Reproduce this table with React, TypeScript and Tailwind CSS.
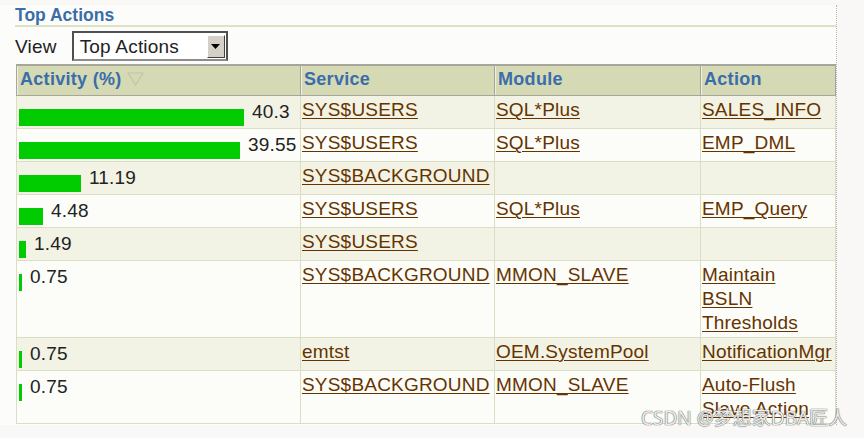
const rows = [
  { pct: '40.3', bar: 225, service: 'SYS$USERS', module: 'SQL*Plus', action: ['SALES_INFO'] },
  { pct: '39.55', bar: 221, service: 'SYS$USERS', module: 'SQL*Plus', action: ['EMP_DML'] },
  { pct: '11.19', bar: 62, service: 'SYS$BACKGROUND', module: '', action: [] },
  { pct: '4.48', bar: 24, service: 'SYS$USERS', module: 'SQL*Plus', action: ['EMP_Query'] },
  { pct: '1.49', bar: 7, service: 'SYS$USERS', module: '', action: [] },
  { pct: '0.75', bar: 3, service: 'SYS$BACKGROUND', module: 'MMON_SLAVE', action: ['Maintain', 'BSLN', 'Thresholds'] },
  { pct: '0.75', bar: 3, service: 'emtst', module: 'OEM.SystemPool', action: ['NotificationMgr'] },
  { pct: '0.75', bar: 3, service: 'SYS$BACKGROUND', module: 'MMON_SLAVE', action: ['Auto-Flush', 'Slave Action'] },
]

const linkCls = 'text-[#663300] underline decoration-1 underline-offset-[2px] whitespace-nowrap'

function HeaderCell({ label, sort }: { label: string; sort?: boolean }) {
  return (
    <div className="flex items-center border-r border-[#a6a69c] shadow-[inset_1px_0_0_#eef0dd] pl-[3px] pt-[1px] pb-[4px]">
      <span className="font-bold text-[18px] leading-[24px] tracking-[0.3px] text-[#3a6daa]">{label}</span>
      {sort && (
        <svg width="17" height="14" viewBox="0 0 17 14" className="ml-[5px]">
          <polygon points="1,1 16,1 8.5,13" fill="none" stroke="#c3c6a6" strokeWidth="1.2" />
        </svg>
      )}
    </div>
  )
}

export default function App() {
  return (
    <div className="relative min-h-[438px] bg-[#f9f8f6] pt-[5px] font-['Liberation_Sans',Arial,sans-serif] text-[19px] leading-[24px] tracking-[0.2px] text-[#222]">
      <div className="w-[837px] bg-[#fcfdfa] border-r border-dotted border-[#b5b5b5] pb-[1px]">
        {/* Heading */}
        <div className="ml-[15px] border-b-2 border-[#dde2c5]">
          <h2 className="text-[17.5px] leading-[20px] font-bold tracking-normal text-[#3a6daa]">Top Actions</h2>
        </div>

        {/* View select */}
        <div className="ml-[15px] mt-[4px] flex items-center">
          <span className="pt-[1px]">View</span>
          <div className="ml-[15px] flex h-[30px] w-[156px] items-center border-2 border-[#505050] border-b-[#8c8c8c] bg-white">
            <span className="pl-[6px] pt-[2px]">Top Actions</span>
            <div className="ml-auto mr-[1px] flex h-[23px] w-[18px] items-center justify-center border border-t-white border-l-white border-b-[#404040] border-r-[#404040] bg-[#d4d0c8]">
              <svg width="9" height="5" viewBox="0 0 9 5">
                <polygon points="0,0 9,0 4.5,5" fill="#000" />
              </svg>
            </div>
          </div>
        </div>

        {/* Table */}
        <div className="ml-[16px] mt-[3px] w-[820px]">
          <div className="grid grid-cols-[284px_194px_206px_135px] border-t-2 border-l border-b border-[#a6a69c] bg-[#d5dab5]">
            <HeaderCell label="Activity (%)" sort />
            <HeaderCell label="Service" />
            <HeaderCell label="Module" />
            <HeaderCell label="Action" />
          </div>
          {rows.map((r, i) => (
            <div
              key={i}
              className={
                'grid grid-cols-[284px_194px_206px_135px] border-l border-b border-[#dadec4] ' +
                (i % 2 === 0 ? 'bg-[#f2f3e4]' : 'bg-[#fcfdf9]')
              }
            >
              <div className="flex items-start border-r border-[#dadec4] pl-[2px] pt-[2px] pb-[2px] whitespace-nowrap">
                <div className="mt-[11px] h-[17px] bg-[#00cc00]" style={{ width: r.bar }} />
                <span className="ml-2 mt-[2px]">{r.pct}</span>
              </div>
              <div className="border-r border-[#dadec4] pl-[1px] pt-[2px] pb-[2px]">
                <a className={linkCls}>{r.service}</a>
              </div>
              <div className="border-r border-[#dadec4] pl-[1px] pt-[2px] pb-[2px]">
                {r.module && <a className={linkCls}>{r.module}</a>}
              </div>
              <div className="border-r border-[#dadec4] pl-[1px] pt-[2px] pb-[2px]">
                {r.action.length > 0 && (
                  <a className={linkCls}>
                    {r.action.map((t, j) => (
                      <span key={j}>
                        {j > 0 && <br />}
                        {t}
                      </span>
                    ))}
                  </a>
                )}
              </div>
            </div>
          ))}
        </div>
      </div>

      <div className="absolute left-[641px] top-[407px] font-['Noto_Sans','Noto_Sans_CJK_SC',sans-serif] text-[19px] leading-[22px] tracking-normal text-[#ececec] [text-shadow:0_0_1px_#555,0_0_1px_#555]">
        CSDN @梦想家DBA匠人
      </div>
    </div>
  )
}
